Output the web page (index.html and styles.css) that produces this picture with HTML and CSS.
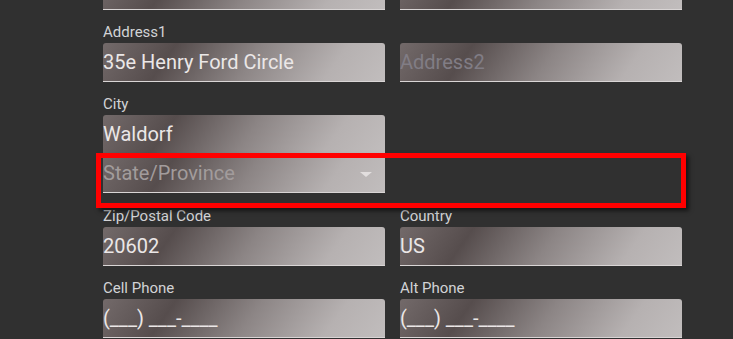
FILE: index.html
```html
<!DOCTYPE html>
<html lang="en">
<head>
    <meta charset="UTF-8">
    <meta name="viewport" content="width=device-width, initial-scale=1.0">
    <title>Contact Details</title>
    <link rel="stylesheet" href="styles.css">
</head>
<body>
    <form class="formulario">
        <div class="linha">
            <div class="grupo">
                <label>&nbsp;</label>
                <input class="campo" type="text">
            </div>
            <div class="grupo">
                <label>&nbsp;</label>
                <input class="campo" type="text">
            </div>
        </div>

        <div class="linha">
            <div class="grupo">
                <label>Address1</label>
                <input class="campo" type="text" value="35e Henry Ford Circle">
            </div>
            <div class="grupo">
                <label>&nbsp;</label>
                <input class="campo" type="text" placeholder="Address2">
            </div>
        </div>

        <div class="linha">
            <div class="grupo grupo-sem-margem">
                <label>City</label>
                <input class="campo" type="text" value="Waldorf">
            </div>
        </div>

        <div class="linha linha-estado">
            <div class="grupo">
                <div class="seletor">
                    <select class="campo campo-select">
                        <option value="" selected>State/Province</option>
                        <option value="MD">MD</option>
                    </select>
                </div>
            </div>
            <div class="destaque"></div>
        </div>

        <div class="linha">
            <div class="grupo">
                <label>Zip/Postal Code</label>
                <input class="campo" type="text" value="20602">
            </div>
            <div class="grupo">
                <label>Country</label>
                <input class="campo" type="text" value="US">
            </div>
        </div>

        <div class="linha">
            <div class="grupo">
                <label>Cell Phone</label>
                <input class="campo" type="text" value="(___) ___-____">
            </div>
            <div class="grupo">
                <label>Alt Phone</label>
                <input class="campo" type="text" value="(___) ___-____">
            </div>
        </div>
    </form>
</body>
</html>
```

FILE: styles.css
```css
body {
    margin: 0;
    padding: 0;
    background-color: #303030;
    font-family: Roboto, "Liberation Sans", Arial, sans-serif;
    overflow: hidden;
}
.formulario {
    width: 579px;
    margin: -48px 0 0 103px;
}
.linha {
    display: grid;
    grid-template-columns: 282px 282px;
    column-gap: 15px;
}
.grupo {
    display: flex;
    flex-direction: column;
    margin-bottom: 14px;
}
.grupo-sem-margem {
    margin-bottom: 0;
}
.grupo label {
    font-size: 15px;
    line-height: 16px;
    color: #d2d3d6;
    margin-bottom: 3px;
}
.campo {
    box-sizing: border-box;
    width: 282px;
    height: 39px;
    margin: 0;
    padding: 0;
    border: none;
    border-bottom: 1px solid #d9d5d5;
    border-radius: 3px 3px 0 0;
    background: linear-gradient(125deg, #736a6a 0%, #564d4d 24%, #8c8585 52%, #b6b1b1 80%, #c1bdbd 100%);
    font-family: Roboto, "Liberation Sans", Arial, sans-serif;
    font-size: 20px;
    color: #ebe7e7;
    outline: none;
}
.campo::placeholder {
    color: #817d85;
}
.linha-estado {
    position: relative;
}
.linha-estado .grupo {
    margin-bottom: 15px;
}
.seletor {
    position: relative;
}
.seletor::after {
    content: "";
    position: absolute;
    top: 18px;
    right: 13px;
    border-left: 6px solid transparent;
    border-right: 6px solid transparent;
    border-top: 5px solid #e2dede;
    pointer-events: none;
}
.campo-select {
    appearance: none;
    -webkit-appearance: none;
    color: #a29c9c;
}
.destaque {
    position: absolute;
    top: -1px;
    left: -7px;
    width: 590px;
    height: 55px;
    box-sizing: border-box;
    border: 5px solid #ff0000;
    box-shadow: 3px 3px 4px rgba(0, 0, 0, 0.55);
    pointer-events: none;
}
```
